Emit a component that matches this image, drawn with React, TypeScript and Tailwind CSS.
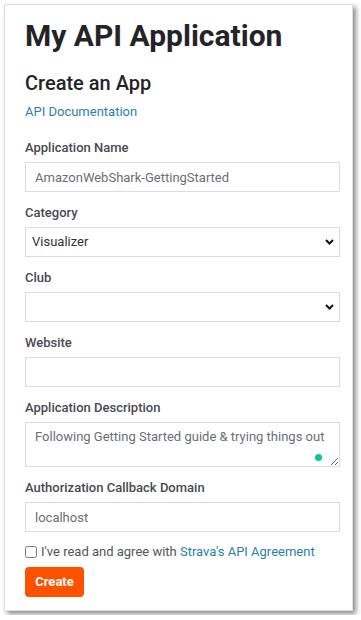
import { useState } from "react";

const labelCls = "block h-4 mb-[6px] text-[13px] leading-4 font-medium text-[#494950]";
const inputCls =
  "block w-full h-[30px] border border-[#dcdcdc] bg-white px-[9px] text-[13px] text-[#6d6d78] outline-none";

const Chevron = () => (
  <svg
    className="pointer-events-none absolute right-[6px] top-[12px]"
    width="9"
    height="6"
    viewBox="0 0 9 6"
    fill="none"
  >
    <path d="M1 1l3.5 3.5L8 1" stroke="#111" strokeWidth="2" />
  </svg>
);

const SelectField = ({ label, value, options }: { label: string; value: string; options: string[] }) => (
  <div>
    <label className={labelCls}>{label}</label>
    <div className="relative">
      <select
        defaultValue={value}
        className="block w-full h-[30px] appearance-none border border-[#dcdcdc] bg-white pl-[6px] pr-6 text-[13px] text-[#333] outline-none"
      >
        {options.map((o) => (
          <option key={o} value={o}>
            {o}
          </option>
        ))}
      </select>
      <Chevron />
    </div>
  </div>
);

export default function App() {
  const [agreed, setAgreed] = useState(false);

  return (
    <div className="p-1 font-['Roboto',sans-serif]">
      <div className="w-[349px] border border-[#dedede] bg-white pt-[13px] pb-[13px] pl-5 pr-3 shadow-[3px_3px_5px_rgba(0,0,0,0.45)]">
        <h1 className="h-9 text-[30px] leading-9 font-bold text-[#242428]">My API Application</h1>
        <h2 className="mt-[15px] h-7 text-[20px] leading-7 font-medium text-[#242428]">Create an App</h2>
        <a href="#" className="mt-[7px] block h-4 text-[13px] leading-4 text-[#2a7faa]">
          API Documentation
        </a>

        <div className="mt-5 flex flex-col gap-[13px]">
          <div>
            <label className={labelCls}>Application Name</label>
            <input className={inputCls} defaultValue="AmazonWebShark-GettingStarted" />
          </div>
          <SelectField label="Category" value="Visualizer" options={["Visualizer", "Training", "Data Importer"]} />
          <SelectField label="Club" value="" options={[""]} />
          <div>
            <label className={labelCls}>Website</label>
            <input className={inputCls} />
          </div>
          <div>
            <label className={labelCls}>Application Description</label>
            <div className="relative">
              <textarea
                className="block w-full h-[45px] border border-[#dcdcdc] bg-white px-[9px] py-[6px] text-[13px] leading-4 text-[#6d6d78] outline-none"
                defaultValue="Following Getting Started guide & trying things out"
              />
              <span className="absolute right-[18px] top-[32px] h-[7px] w-[7px] rounded-full bg-[#15c39a]" />
            </div>
          </div>
          <div>
            <label className={labelCls}>Authorization Callback Domain</label>
            <input className={inputCls} defaultValue="localhost" />
          </div>
        </div>

        <label className="mt-3 flex h-4 items-center gap-[4px] text-[13px] leading-4 text-[#555]">
          <input
            type="checkbox"
            checked={agreed}
            onChange={() => setAgreed(!agreed)}
            className="m-0 h-[12px] w-[12px]"
          />
          <span>
            I've read and agree with{" "}
            <a href="#" className="text-[#2a7faa]">
              Strava's API Agreement
            </a>
          </span>
        </label>

        <button className="mt-[7px] block h-[30px] w-[59px] rounded-[4px] bg-[#fc5200] text-[13px] font-bold text-white">
          Create
        </button>
      </div>
    </div>
  );
}
